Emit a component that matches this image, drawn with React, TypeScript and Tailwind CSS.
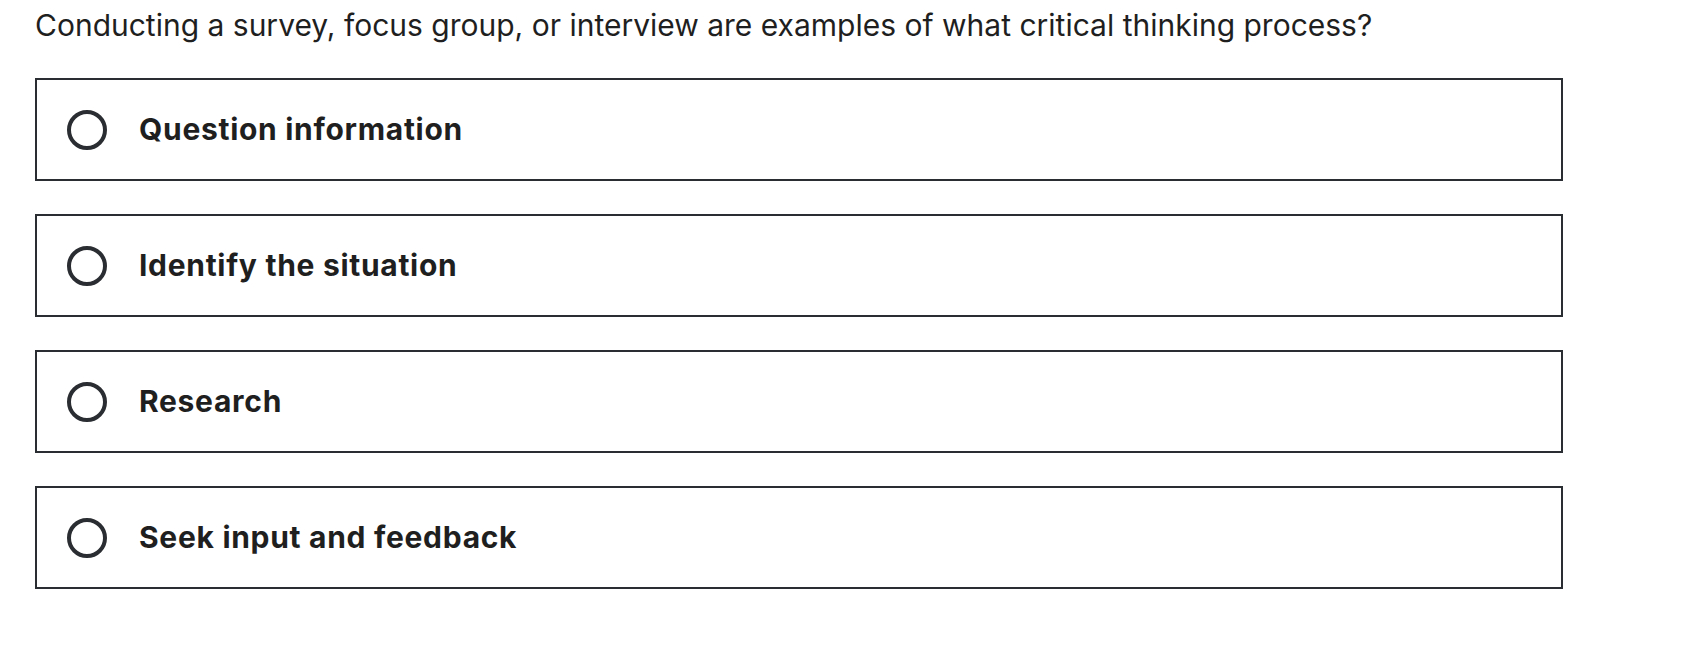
const options = [
  "Question information",
  "Identify the situation",
  "Research",
  "Seek input and feedback",
];

export default function App() {
  return (
    <div className="min-h-[650px] bg-white pl-[35px] pt-[5px] font-['Inter',sans-serif] text-[#1f1f1f]">
      <div className="text-[30px] leading-[40px]">
        Conducting a survey, focus group, or interview are examples of what critical thinking process?
      </div>
      <div className="mt-[33px] flex w-[1528px] flex-col gap-[33px]">
        {options.map((o) => (
          <label
            key={o}
            className="flex h-[103px] items-center border-2 border-[#2a2d31] pl-[30px]"
          >
            <span className="h-[40px] w-[40px] rounded-full border-[4px] border-[#2a2d31]" />
            <span className="ml-[32px] text-[30px] font-bold tracking-[0.7px]">{o}</span>
          </label>
        ))}
      </div>
    </div>
  );
}
